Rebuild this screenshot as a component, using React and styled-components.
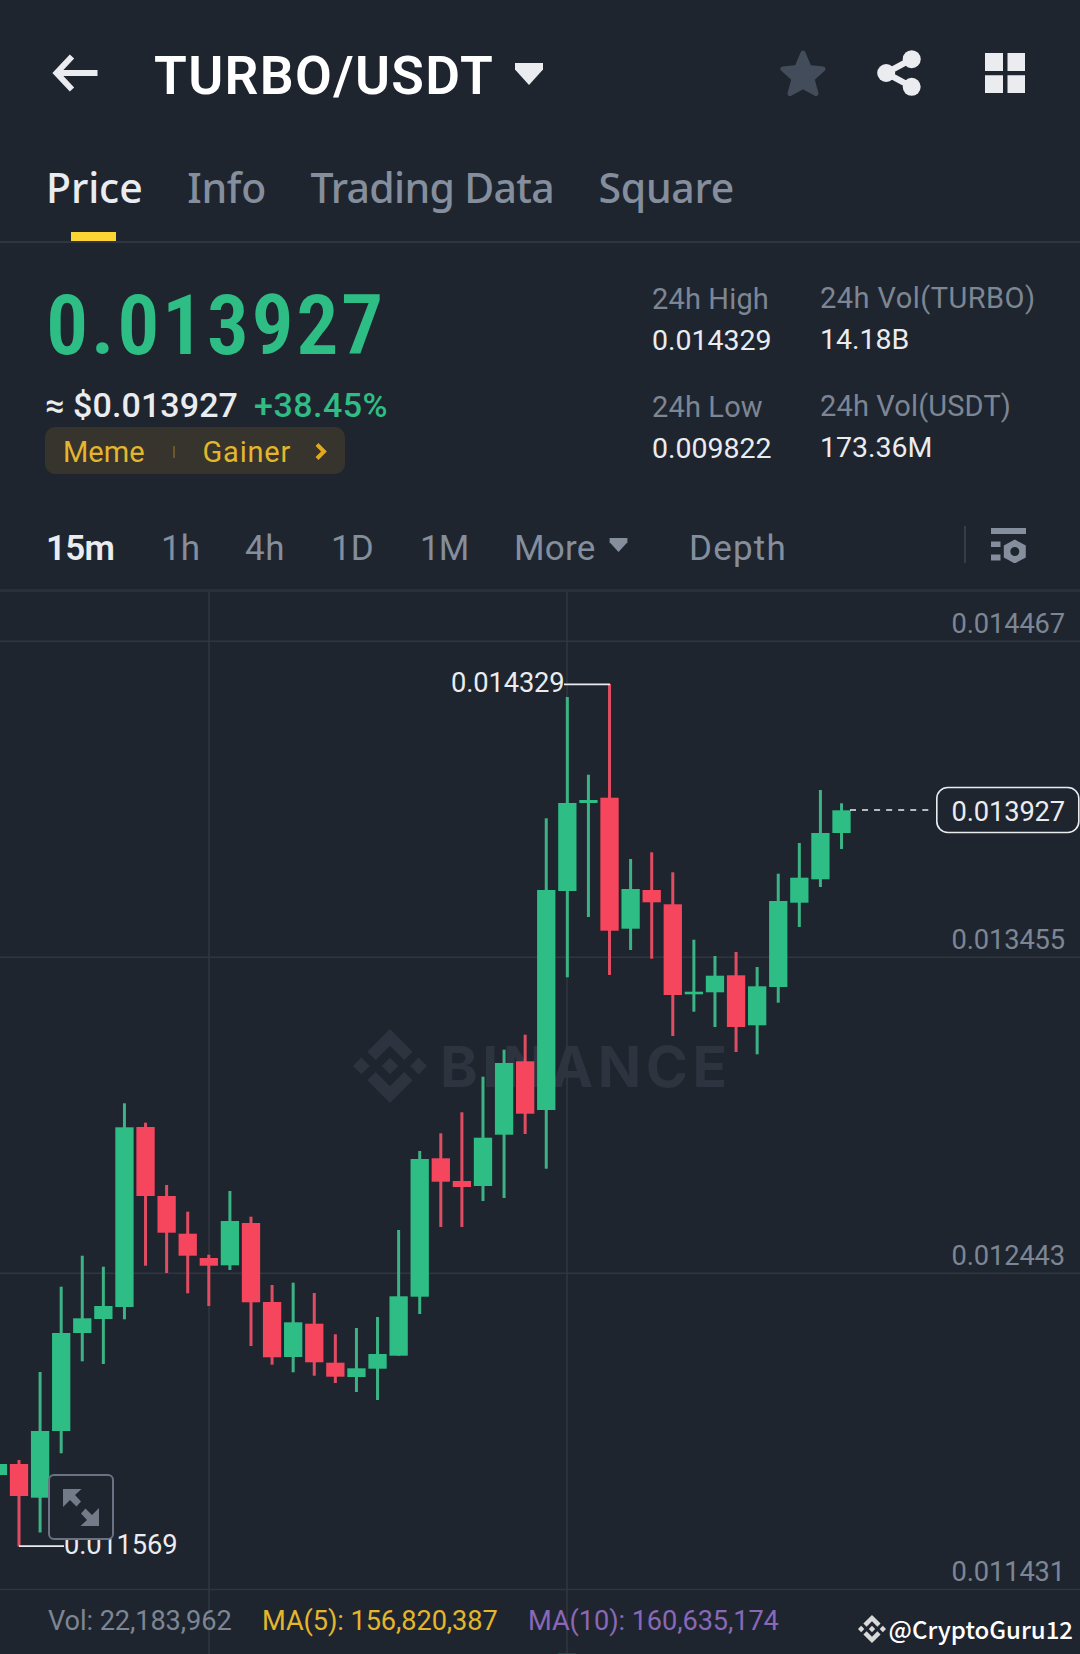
import React, { useState } from 'react';
import styled, { createGlobalStyle } from 'styled-components';
import { SiBinance } from 'react-icons/si';

const GlobalStyle = createGlobalStyle`
  * {
    box-sizing: border-box;
  }

  body {
    margin: 0;
    background: #1f252f;
  }
`;

const Screen = styled.div`
  display: flex;
  flex-direction: column;
  width: 1080px;
  height: 1654px;
  overflow: hidden;
  background: #1f252f;
  color: #eaecef;
  font-family: Roboto, "Liberation Sans", sans-serif;
`;

const Header = styled.header`
  display: flex;
  align-items: center;
  height: 146px;
  padding: 0 55px 0 52px;
`;

const Title = styled.h1`
  display: flex;
  align-items: center;
  gap: 21px;
  margin: 5px 0 0 56px;
  font-size: 53.4px;
  font-weight: 600;
  line-height: 60px;
  letter-spacing: 1.35px;
  color: #fff;

  svg {
    margin-bottom: 3px;
  }
`;

const Actions = styled.div`
  display: flex;
  align-items: center;
  margin-left: auto;
`;

const ActionButton = styled.button`
  display: flex;
  padding: 0;
  border: none;
  background: none;
  margin-left: ${(props) => props.$gap || 0}px;
  color: ${(props) => (props.$muted ? '#434c5a' : '#eaecef')};
`;

const TabBar = styled.nav`
  display: flex;
  gap: 44.6px;
  height: 97px;
  padding-left: 46px;
  border-bottom: 2px solid #2f3641;
`;

const Tab = styled.div`
  display: flex;
  flex-direction: column;
  align-items: center;
  gap: 4px;
  font-family: "Noto Sans", Roboto, sans-serif;
  font-stretch: 85%;
  font-size: 41px;
  font-weight: 500;
  line-height: 82px;
  letter-spacing: ${(props) => props.$spacing || 0}px;
  color: ${(props) => (props.$active ? '#eaecef' : '#848e9c')};

  &::after {
    content: "";
    width: 45px;
    height: 9px;
    margin-right: 2px;
    background: ${(props) => (props.$active ? '#fcd535' : 'transparent')};
  }
`;

const Summary = styled.section`
  display: flex;
  justify-content: space-between;
  height: 263px;
  padding: 32px 0 0 45px;
`;

const PriceColumn = styled.div`
  display: flex;
  flex-direction: column;
  align-items: flex-start;
`;

const LastPrice = styled.div`
  padding: 1px 0 0 1px;
  font-size: 84px;
  font-stretch: 85%;
  font-weight: 600;
  line-height: 100px;
  letter-spacing: 2.5px;
  color: #2ebd85;
`;

const PriceLine = styled.div`
  display: flex;
  gap: 16px;
  margin-top: 7px;
  font-size: 34px;
  font-weight: 500;
  line-height: 44px;
  letter-spacing: 0.1px;
  white-space: pre;
`;

const Change = styled.span`
  letter-spacing: 0.5px;
  color: #2ebd85;
`;

const Tags = styled.div`
  display: flex;
  align-items: center;
  height: 47px;
  width: 300px;
  padding: 2px 18px 0 18px;
  border-radius: 10px;
  background: #36342c;
  font-size: 29px;
  line-height: 40px;
  color: #e3b62c;
`;

const TagDivider = styled.span`
  width: 2px;
  height: 12px;
  margin: 0 28px;
  background: #6a5828;
`;

const TagName = styled.span`
  letter-spacing: ${(props) => props.$spacing || 0}px;
`;

const Stats = styled.div`
  display: flex;
  width: 428px;
`;

const StatColumn = styled.div`
  display: flex;
  flex-direction: column;
  gap: 24px;
  width: ${(props) => props.$width}px;
  padding-top: ${(props) => props.$top}px;
`;

const Stat = styled.div`
  font-size: 28.5px;
  line-height: 42px;
  white-space: nowrap;
`;

const StatLabel = styled.div`
  font-size: 29px;
  letter-spacing: ${(props) => props.$spacing || 0.15}px;
  color: #7d8694;
`;

const IntervalBar = styled.div`
  display: flex;
  align-items: center;
  height: 86px;
  padding: 2px 54px 0 46px;
  border-bottom: 3px solid #2a303b;
  font-size: 35px;
  line-height: 44px;
  color: #848e9c;
`;

const Interval = styled.span`
  width: ${(props) => props.$width}px;
  font-weight: ${(props) => (props.$active ? 600 : 400)};
  letter-spacing: ${(props) => props.$spacing || 0}px;
  color: ${(props) => (props.$active ? '#eaecef' : '#848e9c')};
`;

const MoreInterval = styled(Interval)`
  display: flex;
  align-items: center;
  gap: 14px;

  svg {
    margin-bottom: 8px;
  }
`;

const IntervalTools = styled.div`
  display: flex;
  align-items: center;
  gap: 25px;
  margin-left: auto;
  padding-bottom: 8px;
`;

const ToolDivider = styled.span`
  width: 2px;
  height: 37px;
  background: #363d48;
`;

const ChartArea = styled.main`
  position: relative;
  display: flex;
  flex: 1;
  flex-direction: column;
  justify-content: flex-end;
`;

const ChartSvg = styled.svg`
  position: absolute;
  inset: 0;

  text {
    font-family: Roboto, sans-serif;
    font-size: 27.3px;
    letter-spacing: -0.15px;
  }

  .watermark {
    font-family: Inter, sans-serif;
    font-size: 57px;
    font-weight: 700;
  }
`;

const ExpandButton = styled.button`
  position: absolute;
  left: 48px;
  top: 882px;
  display: flex;
  align-items: center;
  justify-content: center;
  width: 66px;
  height: 66px;
  padding: 0;
  border: 2px solid #6b7382;
  border-radius: 6px;
  background: #1f252f;
`;

const Legend = styled.div`
  position: relative;
  display: flex;
  gap: 30.5px;
  height: 64px;
  padding-left: 48px;
  font-size: 27.2px;
  line-height: 62px;
  letter-spacing: -0.1px;
`;

const LegendItem = styled.span`
  color: ${(props) => props.color};
`;

const Author = styled.div`
  display: flex;
  align-items: center;
  gap: 3px;
  margin: 13px 7px 0 auto;
  height: 51px;
  font-family: "Noto Sans CJK SC", sans-serif;
  font-size: 24px;
  font-weight: 500;
  line-height: 36px;
  letter-spacing: 0;
  color: #fff;

  svg {
    color: #d9d9d9;
  }
`;

const GREEN = '#2ebd85';
const RED = '#f6465d';
const STEP = 21.09;

// [direction, high, body top, body bottom, low]
const candles = [
  ['up', 872, 872, 883, 883],
  ['down', 868, 872, 904, 954.5],
  ['up', 780, 839, 905.7, 940.5],
  ['up', 694.7, 741, 839, 861.3],
  ['up', 663.7, 726.3, 741, 769.3],
  ['up', 674.7, 714, 727, 772],
  ['up', 511.3, 535.3, 715, 727.3],
  ['down', 530.7, 535, 604, 673.7],
  ['down', 593, 604, 640.7, 681],
  ['down', 619.7, 641.7, 663.7, 701.3],
  ['down', 662.7, 666, 673.7, 714],
  ['up', 599, 629, 673.3, 678],
  ['down', 624.7, 631, 710.3, 754],
  ['down', 693, 710, 765.3, 772.7],
  ['up', 690.7, 730.3, 765, 780.3],
  ['down', 701, 731.7, 770.3, 783.7],
  ['down', 742.3, 770.7, 784.7, 791],
  ['up', 736, 776.3, 785, 800],
  ['up', 725, 762, 776.7, 808],
  ['up', 638, 704.3, 763.7, 763.7],
  ['up', 559, 567, 704.7, 722],
  ['down', 541.3, 566.3, 589.7, 635],
  ['down', 520.3, 589, 595, 635],
  ['up', 484.7, 545.7, 594, 609],
  ['up', 457.7, 471, 542.7, 606],
  ['down', 442.7, 469.3, 521.7, 542],
  ['up', 226.3, 298, 518, 576.7],
  ['up', 105, 211, 299, 385.3],
  ['up', 182.7, 208, 211, 325],
  ['down', 92, 205.7, 338.7, 383],
  ['up', 267, 297, 336.7, 358],
  ['down', 260.3, 298, 310.3, 366.7],
  ['down', 280.3, 312.3, 403, 444],
  ['up', 347.7, 399.7, 402.3, 419.7],
  ['up', 364, 383.7, 400.3, 435],
  ['down', 360, 383.3, 435, 460],
  ['up', 375, 394.3, 433.3, 462.3],
  ['up', 281.7, 309, 395, 410.7],
  ['up', 251, 285.7, 310.7, 335],
  ['up', 198, 241, 287.3, 295],
  ['up', 211.3, 218.3, 241, 257],
];

const gridRows = [
  { y: 49.3, label: '0.014467' },
  { y: 365.3, label: '0.013455' },
  { y: 681.3, label: '0.012443' },
  { y: 997.5, label: '0.011431' },
];

const Caret = ({ width, height, color }) => (
  <svg width={width} height={height} viewBox="0 0 28 22">
    <path d="M0 0h28v6.5L14 22 0 6.5z" fill={color} />
  </svg>
);

const Candle = ({ index, data }) => {
  const [direction, high, top, bottom, low] = data;
  const x = 19 + (index - 1) * STEP;
  const up = direction === 'up';
  return (
    <g>
      <rect x={x - 1.5} y={high} width={3} height={low - high} fill={up ? '#3cb384' : '#e04d62'} />
      <rect x={x - 9.15} y={top} width={18.3} height={bottom - top} fill={up ? GREEN : RED} />
    </g>
  );
};

const Chart = () => (
  <ChartSvg width="1080" height="1062" viewBox="0 0 1080 1062">
    <SiBinance x={353} y={437} size={74} color="#2e343f" />
    <text className="watermark" x="440" y="495" textLength="287" fill="#2e343f">BINANCE</text>
    <g stroke="#2f3640" strokeWidth="1.6">
      {gridRows.map((row) => (
        <line key={row.label} x1="0" x2="1080" y1={row.y} y2={row.y} />
      ))}
      <line x1="209" x2="209" y1="0" y2="1062" />
      <line x1="567" x2="567" y1="0" y2="1062" />
    </g>
    {gridRows.map((row) => (
      <text key={row.label} x="1065" y={row.y - 8.6} textAnchor="end" fill="#7d8694">{row.label}</text>
    ))}

    {candles.map((data, index) => (
      <Candle key={index} index={index} data={data} />
    ))}
    <rect x="558" y="1061" width="18" height="1" fill="#1d4a40" />

    {/* highest and lowest price of the visible range */}
    <g stroke="#eaecef" strokeWidth="1.7">
      <line x1="564" x2="610" y1="92.3" y2="92.3" />
      <line x1="19" x2="64" y1="954.2" y2="954.2" />
      <line x1="850" x2="929" y1="218" y2="218" strokeDasharray="6 6.05" />
    </g>
    <text x="564.5" y="99.7" textAnchor="end" fill="#eaecef">0.014329</text>
    <text x="64" y="962" fill="#eaecef">0.011569</text>

    <rect x="936.8" y="195.5" width="142" height="45" rx="11" fill="#1f252f" stroke="#eaecef" strokeWidth="1.6" />
    <text x="1065" y="228.7" textAnchor="end" fill="#eaecef">0.013927</text>
  </ChartSvg>
);

const tabs = [
  { name: 'Price', spacing: -0.1 },
  { name: 'Info', spacing: -0.3 },
  { name: 'Trading Data', spacing: -0.7 },
  { name: 'Square', spacing: -0.3 },
];

const App = () => {
  const [activeTab, setActiveTab] = useState('Price');

  return (
    <Screen>
      <GlobalStyle />
      <Header>
        <ActionButton>
          <svg width="46" height="38" viewBox="0 0 46 38" fill="none" stroke="currentColor" strokeWidth="6">
            <path d="M20 2.5L4.5 19 20 35.5M5 19h40.5" />
          </svg>
        </ActionButton>
        <Title>
          TURBO/USDT
          <Caret width={28} height={22} color="#eaecef" />
        </Title>
        <Actions>
          <ActionButton $muted>
            <svg width="46" height="46" viewBox="0 0 46 46">
              <path
                d="M23 3l6 14.5 14 1.5-11 10 4 14.5L23 36.5 10 43.5l4-14.5L3 19l14-1.5z"
                fill="currentColor"
                stroke="currentColor"
                strokeWidth="5"
                strokeLinejoin="round"
              />
            </svg>
          </ActionButton>
          <ActionButton $gap={51}>
            <svg width="44" height="46" viewBox="0 0 44 46" fill="currentColor">
              <path d="M9 23L35 9M9 23l26 14" stroke="currentColor" strokeWidth="6" />
              <circle cx="9.2" cy="23" r="9" />
              <circle cx="34.7" cy="9.2" r="9" />
              <circle cx="34.7" cy="36.8" r="9" />
            </svg>
          </ActionButton>
          <ActionButton $gap={64}>
            <svg width="40" height="40" viewBox="0 0 40 40" fill="currentColor">
              <path d="M0 0h18v18H0zM22.5 0H40v18H22.5zM0 22.3h18V40H0zM22.5 22.3H40V40H22.5z" />
            </svg>
          </ActionButton>
        </Actions>
      </Header>

      <TabBar>
        {tabs.map((tab) => (
          <Tab
            key={tab.name}
            $active={tab.name === activeTab}
            $spacing={tab.spacing}
            onClick={() => setActiveTab(tab.name)}
          >
            {tab.name}
          </Tab>
        ))}
      </TabBar>

      <Summary>
        <PriceColumn>
          <LastPrice>0.013927</LastPrice>
          <PriceLine>
            <span>≈ $0.013927</span>
            <Change>+38.45%</Change>
          </PriceLine>
          <Tags>
            <TagName>Meme</TagName>
            <TagDivider />
            <TagName $spacing={0.8}>Gainer</TagName>
            <svg width="12" height="17" viewBox="0 0 12 17" style={{ marginLeft: 'auto' }}>
              <path d="M2 1.5l7 7-7 7" fill="none" stroke="#e3a81c" strokeWidth="4" />
            </svg>
          </Tags>
        </PriceColumn>
        <Stats>
          <StatColumn $width={168} $top={3}>
            <Stat>
              <StatLabel>24h High</StatLabel>
              0.014329
            </Stat>
            <Stat>
              <StatLabel>24h Low</StatLabel>
              0.009822
            </Stat>
          </StatColumn>
          <StatColumn $width={260} $top={2}>
            <Stat>
              <StatLabel $spacing={0.45}>24h Vol(TURBO)</StatLabel>
              14.18B
            </Stat>
            <Stat>
              <StatLabel>24h Vol(USDT)</StatLabel>
              173.36M
            </Stat>
          </StatColumn>
        </Stats>
      </Summary>

      <IntervalBar>
        <Interval $width={115} $active $spacing={-0.8}>15m</Interval>
        <Interval $width={84}>1h</Interval>
        <Interval $width={86} $spacing={0.5}>4h</Interval>
        <Interval $width={89} $spacing={0.2}>1D</Interval>
        <Interval $width={94} $spacing={-1}>1M</Interval>
        <MoreInterval $width={175} $spacing={0.2}>
          More
          <Caret width={19} height={14} color="#848e9c" />
        </MoreInterval>
        <Interval $width={100} $spacing={1.2}>Depth</Interval>
        <IntervalTools>
          <ToolDivider />
          <svg width="35" height="36" viewBox="0 0 35 36" fill="#848e9c">
            <path d="M0 1h35v6H0zM0 14.5h9.5v5.5H0zM0 27.5h9.5v6H0z" />
            <path
              fillRule="evenodd"
              d="M23.8 12.5l11 6v12l-11 6-11-6v-12zM23.8 20a4.5 4.5 0 100 9 4.5 4.5 0 000-9z"
            />
          </svg>
        </IntervalTools>
      </IntervalBar>

      <ChartArea>
        <Chart />
        <ExpandButton>
          <svg width="36" height="37" viewBox="0 0 36 37" fill="#737b8b">
            <path d="M0 0h18.5l-6.5 6 6 6.5-4.5 5-6.5-6.500-7 7z" />
            <path d="M36 37H17.5l6.500-6-6-6.500 4.500-5 6.500 6.500 7-7z" />
          </svg>
        </ExpandButton>
        <Legend>
          <LegendItem color="#7d8694">Vol: 22,183,962</LegendItem>
          <LegendItem color="#e3b62c">MA(5): 156,820,387</LegendItem>
          <LegendItem color="#8a68b8">MA(10): 160,635,174</LegendItem>
          <Author>
            <SiBinance size={28} />
            @CryptoGuru12
          </Author>
        </Legend>
      </ChartArea>
    </Screen>
  );
};

export default App;
